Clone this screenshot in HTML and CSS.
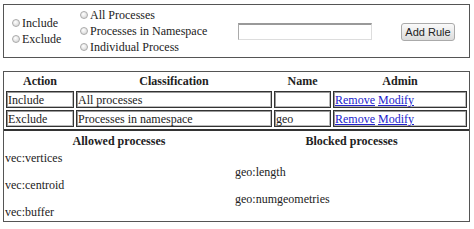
FILE: index.html
```html
<html>

<head>
    <link rel="stylesheet" href="styles.css">
</head>

<body>

    <div class="rule-form">
        <div class="group action-group">
            <label class="opt"><input type="radio" name="action"> Include</label>
            <label class="opt"><input type="radio" name="action"> Exclude</label>
        </div>
        <div class="group class-group">
            <label class="opt"><input type="radio" name="cls"> All Processes</label>
            <label class="opt"><input type="radio" name="cls"> Processes in Namespace</label>
            <label class="opt"><input type="radio" name="cls"> Individual Process</label>
        </div>
        <input type="text" class="name-field">
        <button class="add-btn">Add Rule</button>
    </div>

    <div class="rules-box">
        <table class="rules">
            <tr>
                <th class="col-action">Action</th>
                <th class="col-class">Classification</th>
                <th class="col-name">Name</th>
                <th class="col-admin">Admin</th>
            </tr>
            <tr>
                <td>Include</td>
                <td>All processes</td>
                <td></td>
                <td><a href="#">Remove</a> <a href="#">Modify</a></td>
            </tr>
            <tr>
                <td>Exclude</td>
                <td>Processes in namespace</td>
                <td>geo</td>
                <td><a href="#">Remove</a> <a href="#">Modify</a></td>
            </tr>
        </table>

        <div class="procs">
            <div class="proc-col">
                <div class="proc-head">Allowed processes</div>
                <div class="proc-list">
                    <div>vec:vertices</div>
                    <div>vec:centroid</div>
                    <div>vec:buffer</div>
                </div>
            </div>
            <div class="proc-col">
                <div class="proc-head">Blocked processes</div>
                <div class="proc-list">
                    <div>geo:length</div>
                    <div>geo:numgeometries</div>
                </div>
            </div>
        </div>
    </div>

</body>

</html>
```
FILE: styles.css
```css
body {
    font-family: "Liberation Serif", serif;
    font-size: 12px;
    color: #222;
    background-color: #fff;
    margin: 0;
    padding: 4px 0 0 3px;
}

.rule-form {
    width: 465px;
    height: 52px;
    border: 1px solid #555;
    display: flex;
    align-items: center;
}

.group {
    display: flex;
    flex-direction: column;
}

.action-group {
    margin-left: 8px;
    width: 68px;
}

.class-group {
    width: 158px;
}

.opt {
    line-height: 16px;
    display: flex;
    align-items: center;
    white-space: nowrap;
}

.opt input {
    -webkit-appearance: none;
    appearance: none;
    width: 8px;
    height: 8px;
    margin: 0 2px 0 0;
    border: 1px solid #aaa;
    border-radius: 50%;
    background: radial-gradient(circle at 40% 35%, #fff, #ddd 70%);
}

.name-field {
    width: 134px;
    height: 17px;
    padding: 0;
    border: 1px solid #ddd;
    border-top: 2px solid #999;
    border-left: 1px solid #aaa;
    margin-top: 1px;
}

.add-btn {
    margin-left: 29px;
    width: 54px;
    height: 18px;
    padding: 0;
    font-family: "Liberation Sans", sans-serif;
    font-size: 11px;
    color: #222;
    border: 1px solid #aaa;
    border-radius: 3px;
    background: linear-gradient(#fafafa, #dcdcdc);
    margin-top: 1px;
}

.rules-box {
    margin-top: 13px;
    width: 465px;
    border: 1px solid #555;
}

.rules {
    font-size: 12px;
    border-collapse: separate;
    border-spacing: 2px 2px;
    margin: -1px 0 0 0;
    width: 100%;
}

.rules th {
    font-weight: bold;
    height: 16px;
    padding: 0;
    line-height: 14px;
}

.rules td {
    border: 1px solid #333;
    box-shadow: inset 1px 1px 0 #999, inset -1px -1px 0 #bbb;
    padding: 1px 1px 0 1px;
    height: 14px;
    line-height: 14px;
    white-space: nowrap;
}

.col-action {
    width: 68px;
}

.col-class {
    width: 196px;
}

.col-name {
    width: 57px;
}

.rules a {
    color: #2222cc;
}

.procs {
    border-top: 2px solid #333;
    display: grid;
    grid-template-columns: 230px 1fr;
}

.proc-col {
    display: flex;
    flex-direction: column;
}

.proc-head {
    font-weight: bold;
    text-align: center;
    line-height: 14px;
    margin-top: 3px;
}

.proc-list {
    flex: 1;
    display: flex;
    flex-direction: column;
    justify-content: center;
    gap: 13px;
    line-height: 14px;
    padding: 3px 0 2px 1px;
}
```
